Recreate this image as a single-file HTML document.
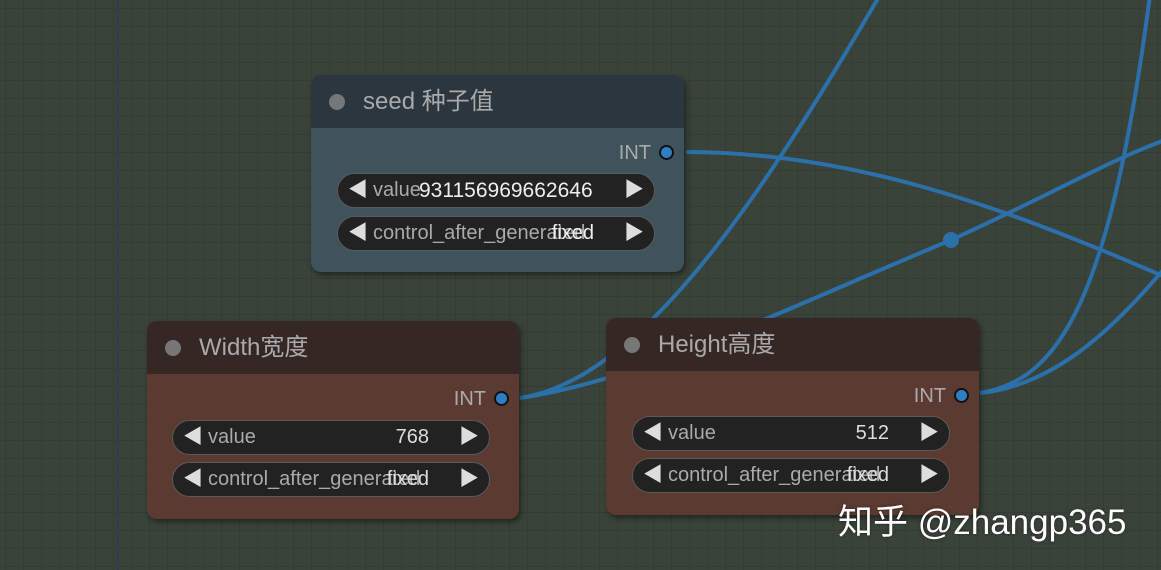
<!DOCTYPE html>
<html><head><meta charset="utf-8"><style>
body{margin:0;width:1161px;height:570px;overflow:hidden;background:#3a4339;position:relative;font-family:"Liberation Sans","Noto Sans CJK SC",sans-serif;
background-image:linear-gradient(#343c33 1px,transparent 1px),linear-gradient(90deg,#343c33 1px,transparent 1px);background-size:18px 18px;background-position:5px 8px}
.vl{position:absolute;left:116px;top:0;width:3px;height:570px;background:#353c4a}
.node{position:absolute;border-radius:10px;overflow:hidden;box-shadow:2px 3px 6px rgba(0,0,0,.45)}
.hd{height:53px;position:relative;color:#aaa;font-size:24px;line-height:53px;padding-left:52px}
.hd:before{content:"";position:absolute;left:18px;top:19px;width:16px;height:16px;border-radius:50%;background:#777}
.out{position:absolute;right:10px;font-size:20px;color:#aaa}
.out i{display:inline-block;width:11px;height:11px;border-radius:50%;background:#2d7fc1;border:2px solid #111;vertical-align:-1px;margin-left:8px}
.w{position:absolute;height:35px;border-radius:18px;background:#222;border:1px solid #5a5a5a;color:#ccc;font-size:20px;line-height:33px;box-sizing:border-box}
.w .l{position:absolute;left:10px;color:#ddd}
.w .r{position:absolute;right:10px;color:#ddd}
.w .n{position:absolute;left:35px;color:#aaa}
.w .v{position:absolute;right:60px;color:#ddd}
</style></head><body>
<div class="vl"></div>
<svg width="1161" height="570" style="position:absolute;left:0;top:0" fill="none" stroke="#2b70aa" stroke-width="4">
<path d="M686,152 C850,152 1000,205 1165,277"/>
<path d="M520,398 C640,380 760,200 880,-5"/>
<path d="M520,398 C640,380 760,320 951,240 C1050,195 1110,160 1165,140"/>
<path d="M980,393 C1060,380 1110,300 1150,-5"/>
<path d="M980,393 C1060,385 1120,320 1165,268"/>
<circle cx="951" cy="240" r="8" fill="#2b70aa" stroke="none"/>
</svg>
<div class="node" style="left:311px;top:75px;width:373px;height:197px;background:#3e535b">
<div class="hd" style="background:#2b363e">seed 种子值</div>
<div class="out" style="top:67px">INT<i></i></div>
<div class="w" style="left:26px;top:98px;width:318px"><span class="l">◀</span><span class="n">value</span><span style="position:absolute;left:81px;color:#eee;font-size:21px">931156969662646</span><span class="r">▶</span></div>
<div class="w" style="left:26px;top:141px;width:318px"><span class="l">◀</span><span class="n">control_after_generated</span><span class="v" style="color:#eee">fixed</span><span class="r">▶</span></div>
</div>
<div class="node" style="left:147px;top:321px;width:372px;height:198px;background:#5b3a31">
<div class="hd" style="background:#352824">Width宽度</div>
<div class="out" style="top:67px">INT<i></i></div>
<div class="w" style="left:25px;top:99px;width:318px"><span class="l">◀</span><span class="n">value</span><span class="v">768</span><span class="r">▶</span></div>
<div class="w" style="left:25px;top:141px;width:318px"><span class="l">◀</span><span class="n">control_after_generated</span><span class="v">fixed</span><span class="r">▶</span></div>
</div>
<div class="node" style="left:606px;top:318px;width:373px;height:197px;background:#5b3a31">
<div class="hd" style="background:#352824">Height高度</div>
<div class="out" style="top:67px">INT<i></i></div>
<div class="w" style="left:26px;top:98px;width:318px"><span class="l">◀</span><span class="n">value</span><span class="v">512</span><span class="r">▶</span></div>
<div class="w" style="left:26px;top:140px;width:318px"><span class="l">◀</span><span class="n">control_after_generated</span><span class="v">fixed</span><span class="r">▶</span></div>
</div>
<div style="position:absolute;left:838px;top:494px;color:#fff;font-size:35px;text-shadow:0 0 3px rgba(0,0,0,.4)">知乎 @zhangp365</div>
</body></html>
